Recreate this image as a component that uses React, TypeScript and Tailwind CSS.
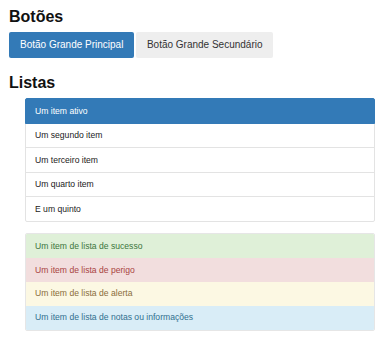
import React from "react";

const items = ["Um item ativo", "Um segundo item", "Um terceiro item", "Um quarto item", "E um quinto"];

const contextual = [
  { label: "Um item de lista de sucesso", cls: "bg-[#dff0d8] text-[#3c763d]" },
  { label: "Um item de lista de perigo", cls: "bg-[#f2dede] text-[#a94442]" },
  { label: "Um item de lista de alerta", cls: "bg-[#fcf8e3] text-[#8a6d3b]" },
  { label: "Um item de lista de notas ou informações", cls: "bg-[#d9edf7] text-[#31708f]" },
];

export default function App() {
  return (
    <div
      className="w-[380px] h-[337px] bg-white pl-[9px] pr-[5px] pt-[6.5px] text-[#333]"
      style={{ fontFamily: '"Liberation Sans", Arial, sans-serif' }}
    >
      {/* Buttons */}
      <h2 className="text-[16px] leading-[20px] font-bold text-[#111]">Botões</h2>
      <div className="mt-[5.5px] flex gap-[2px]">
        <button className="h-[26px] px-[11px] rounded-[2px] bg-[#337ab7] text-white text-[10px] leading-[14px]">
          Botão Grande Principal
        </button>
        <button className="h-[26px] px-[10.5px] rounded-[2px] bg-[#eeeeee] text-[#333] text-[10px] leading-[14px]">
          Botão Grande Secundário
        </button>
      </div>

      {/* Lists */}
      <h2 className="mt-[14.5px] text-[16px] leading-[20px] font-bold text-[#111]">Listas</h2>
      <div className="mt-[5.5px] ml-[16px] flex flex-col">
        {items.map((label, i) => (
          <div
            key={label}
            className={`relative -mb-px border px-[9px] py-[5.5px] text-[8.6px] leading-[12.5px] ${
              i === 0
                ? "z-10 rounded-t-[2px] border-[#337ab7] bg-[#337ab7] text-white"
                : "border-[#e3e3e3] bg-white text-[#222]"
            } ${i === items.length - 1 ? "rounded-b-[2px]" : ""}`}
          >
            {label}
          </div>
        ))}
      </div>

      <div className="mt-[12.5px] ml-[16px] flex flex-col overflow-hidden rounded-[2px] border border-[#e6e6e6]">
        {contextual.map((c) => (
          <div key={c.label} className={`px-[9px] py-[5.7px] text-[8.6px] leading-[12.5px] ${c.cls}`}>
            {c.label}
          </div>
        ))}
      </div>
    </div>
  );
}
